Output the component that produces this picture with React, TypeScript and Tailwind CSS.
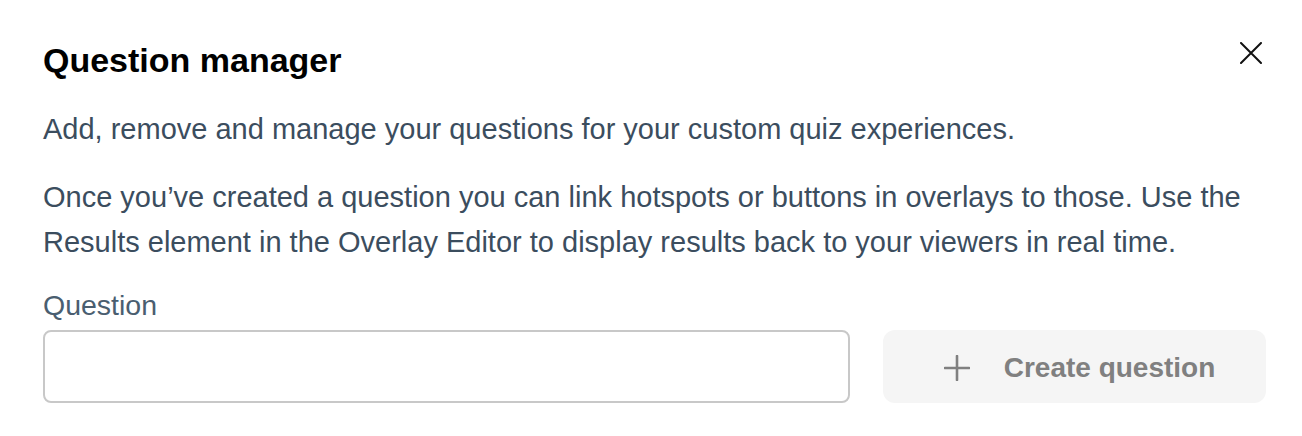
import React from "react";

export default function App() {
  return (
    <div className="w-[1302px] h-[436px] bg-white relative" style={{ fontFamily: '"Liberation Sans", Arial, sans-serif' }}>
      <div className="pl-[43px] pr-[36px] pt-[40px]">
        <div className="flex items-start justify-between">
          <h1 className="text-[34px] leading-[40px] font-bold text-black">Question manager</h1>
          <button className="mt-[2px] mr-[4px] w-[22px] h-[22px] flex items-center justify-center">
            <svg width="22" height="22" viewBox="0 0 22 22" fill="none" stroke="#111" strokeWidth="2" strokeLinecap="round">
              <path d="M1 1L21 21M21 1L1 21" />
            </svg>
          </button>
        </div>
        <p className="mt-[27px] text-[29px] leading-[45px] text-[#3b4d5e]">
          Add, remove and manage your questions for your custom quiz experiences.
        </p>
        <p className="mt-[23px] text-[29px] leading-[45px] text-[#3b4d5e]">
          Once you’ve created a question you can link hotspots or buttons in overlays to those. Use the Results element in the Overlay Editor to display results back to your viewers in real time.
        </p>
        <label className="block mt-[20px] text-[28.5px] leading-[40px] text-[#4a5e70]">Question</label>
        <div className="mt-[5px] flex gap-[33px]">
          <input className="w-[807px] h-[73px] border-2 border-[#c8c8c8] rounded-[8px] outline-none px-4 text-[28px]" />
          <button className="w-[383px] h-[73px] pl-[10px] pt-[3px] rounded-[12px] bg-[#f5f5f5] flex items-center justify-center gap-[34px] text-[#808080]">
            <svg width="26" height="26" viewBox="0 0 26 26" fill="none" stroke="#808080" strokeWidth="2.6" strokeLinecap="round">
              <path d="M13 1V25M1 13H25" />
            </svg>
            <span className="text-[28px] font-bold">Create question</span>
          </button>
        </div>
      </div>
    </div>
  );
}
